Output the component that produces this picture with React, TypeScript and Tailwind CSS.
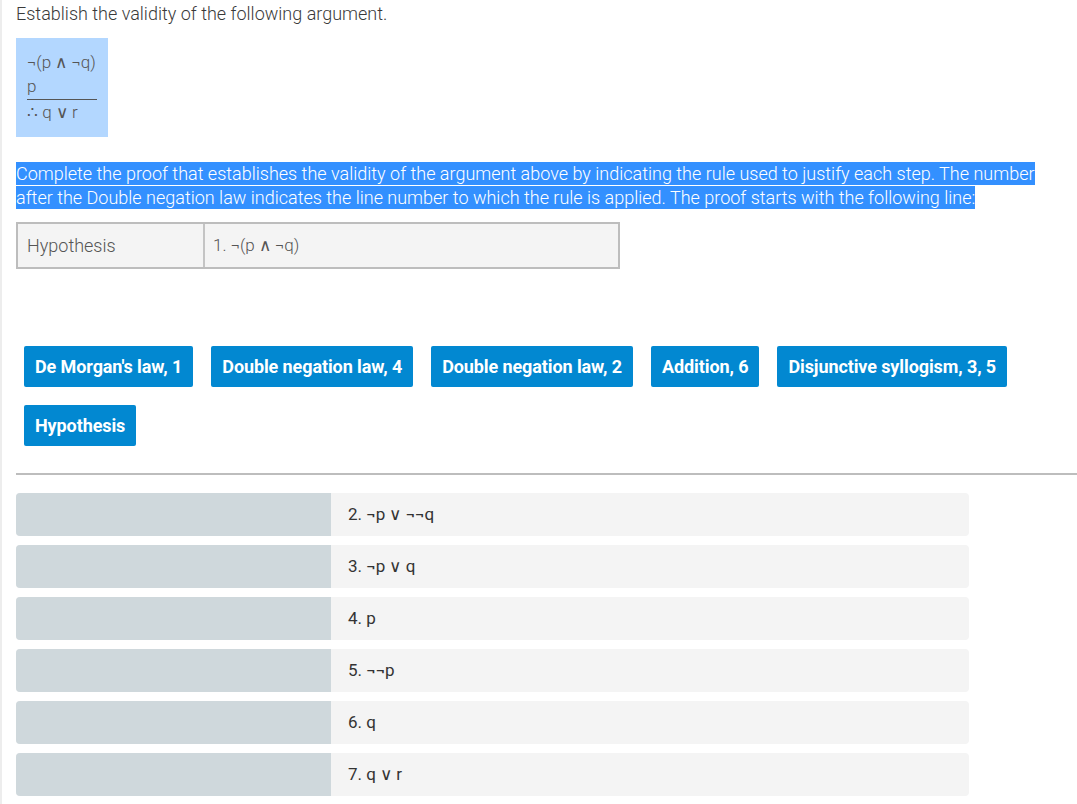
import React from 'react';

const rules = [
    "De Morgan's law, 1",
    'Double negation law, 4',
    'Double negation law, 2',
    'Addition, 6',
    'Disjunctive syllogism, 3, 5',
    'Hypothesis',
];

const steps = ['2. ¬p ∨ ¬¬q', '3. ¬p ∨ q', '4. p', '5. ¬¬p', '6. q', '7. q ∨ r'];

export default function App() {
    return (
        <div className="min-h-[804px] border-l-2 border-[#ededed] bg-white pl-[14px] text-[18px] text-[#333]" style={{ fontFamily: 'Roboto, "Noto Sans", sans-serif' }}>
            {/* Question text */}
            <p className="pt-[2px] leading-6 font-light text-[#3a3a3a]">Establish the validity of the following argument.</p>

            {/* Argument */}
            <div className="mt-3 w-[92px] bg-[#b3d7ff] px-[11px] pt-3 pb-[13px] text-[17px] leading-[25px] font-light text-[#555]">
                <div className="h-6">¬(p ∧ ¬q)</div>
                <div className="h-[26px] border-b border-[#555]">p</div>
                <div className="h-6">∴ q ∨ r</div>
            </div>

            {/* Instructions (selected text) */}
            <p className="mt-[25px] pr-[30px] leading-6 font-light">
                <span className="bg-[#3390ff] py-[1px] text-white [box-decoration-break:clone]">
                    Complete the proof that establishes the validity of the argument above by indicating the rule used to justify each step. The number after the Double negation law indicates the line number to which the rule is applied. The proof starts with the following line:
                </span>
            </p>

            {/* Starting line */}
            <div className="mt-3 flex h-[47px] w-[604px] border-2 border-[#bdbdbd] bg-[#f4f4f4] font-light text-[#555]">
                <div className="flex w-[187px] items-center border-r-2 border-[#c4c4c4] pl-[9px]">Hypothesis</div>
                <div className="flex items-center pl-[8px] text-[17px]">1. ¬(p ∧ ¬q)</div>
            </div>

            {/* Rule bank */}
            <div className="mt-[77px] flex flex-wrap gap-[18px] pl-2">
                {rules.map((r) => (
                    <button key={r} className="h-[41px] rounded-[2px] bg-[#0288d1] px-[11px] text-[18px] font-bold tracking-[-0.1px] text-white">
                        {r}
                    </button>
                ))}
            </div>

            <div className="mt-[27px] h-[2px] bg-[#bdbdbd]"></div>

            {/* Proof rows */}
            <div className="mt-[18px] flex w-[953px] flex-col gap-[9px]">
                {steps.map((s) => (
                    <div key={s} className="flex h-[43px] overflow-hidden rounded-[4px] bg-[#f4f4f4]">
                        <div className="w-[315px] bg-[#cfd8dc]"></div>
                        <div className="flex items-center pl-[17px] text-[17px] text-[#333]">{s}</div>
                    </div>
                ))}
            </div>
        </div>
    );
}
